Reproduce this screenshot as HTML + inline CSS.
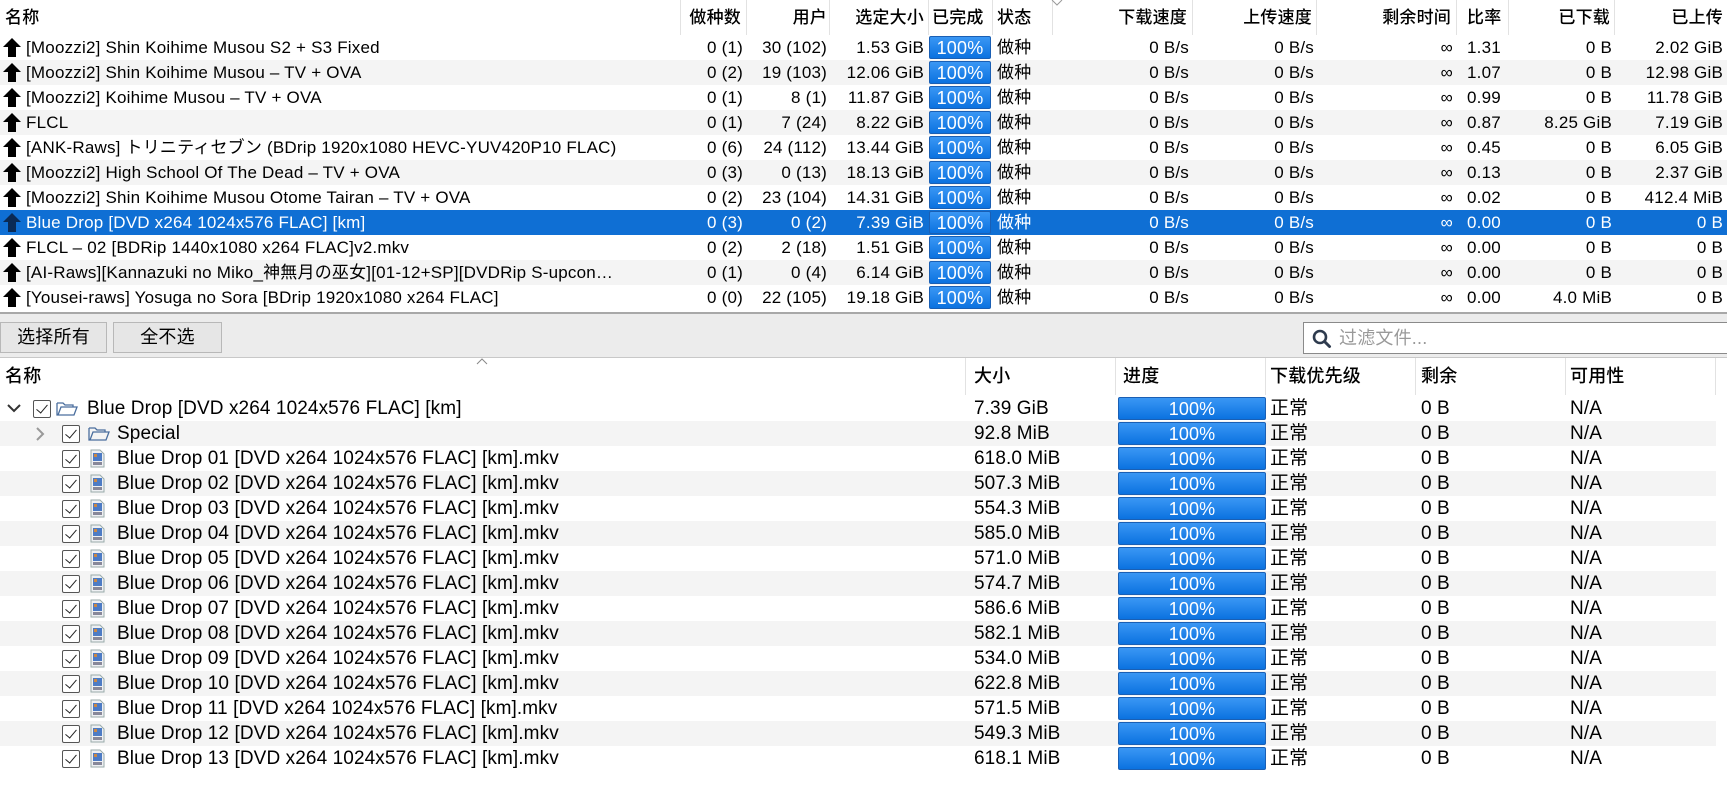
<!DOCTYPE html>
<html><head><meta charset="utf-8"><style>
*{margin:0;padding:0;box-sizing:border-box}
body{width:1727px;height:785px;overflow:hidden;background:#fff;font-family:"Liberation Sans","Noto Sans CJK SC",sans-serif;font-size:17px;letter-spacing:0.2px;color:#000;position:relative}
.r{position:absolute;left:0;width:1727px;height:25px;line-height:25px;white-space:nowrap}
.r span{position:absolute;top:0}
.lo{font-size:19px;letter-spacing:0.1px}
.g{background:#f4f4f4}
.sel{background:#0f6fd4;color:#fff}
.rt{text-align:right}
.hd{position:absolute;left:0;width:1727px;white-space:nowrap;font-weight:500}
.hd span{position:absolute}
.dv{position:absolute;width:1px;background:#e2e2e2}
.bar{position:absolute;height:23px;top:1px;line-height:22px;text-align:center;color:#fff;background:linear-gradient(#3a97f4,#0b72e0);border:1px solid #1a5fb4;border-radius:2px;font-size:18px}
.c0{left:26px}.c1{left:680px;width:63px}.c2{left:746px;width:81px}.c3{left:829px;width:95px}
.c5{left:997px}.c6{left:1052px;width:137px}.c7{left:1192px;width:122px}.c8{left:1316px;width:137px}
.c9{left:1467px}.c10{left:1508px;width:104px}.c11{left:1614px;width:109px}
.ar{position:absolute;left:2px;top:3px}
.l1{left:974px}.l3{left:1270px}.l4{left:1421px}.l5{left:1570px}
.cb{position:absolute;top:4px;width:18px;height:18px;border:1px solid #555;border-radius:2px;background:#fff}
.cb:after{content:"";position:absolute;left:5px;top:1px;width:5px;height:10px;border:solid #222;border-width:0 1.5px 1.5px 0;transform:rotate(40deg)}
.btn{position:absolute;top:322px;height:31px;border:1px solid #b8b8b8;background:#e6e6e6;text-align:center;line-height:29px;font-size:18px}
</style></head><body>
<div class="hd" style="top:0;height:35px;line-height:35px">
<span style="left:5px">名称</span>
<span class="rt" style="left:680px;width:61px">做种数</span>
<span class="rt" style="left:746px;width:81px">用户</span>
<span class="rt" style="left:829px;width:95px">选定大小</span>
<span style="left:932px">已完成</span>
<span style="left:997px">状态</span>
<span class="rt" style="left:1052px;width:135px">下载速度</span>
<span class="rt" style="left:1192px;width:120px">上传速度</span>
<span class="rt" style="left:1316px;width:135px">剩余时间</span>
<span style="left:1467px">比率</span>
<span class="rt" style="left:1508px;width:102px">已下载</span>
<span class="rt" style="left:1614px;width:109px">已上传</span>
</div>
<div class="dv" style="left:680px;top:0;height:35px"></div><div class="dv" style="left:746px;top:0;height:35px"></div><div class="dv" style="left:829px;top:0;height:35px"></div><div class="dv" style="left:928px;top:0;height:35px"></div><div class="dv" style="left:992px;top:0;height:35px"></div><div class="dv" style="left:1052px;top:0;height:35px"></div><div class="dv" style="left:1192px;top:0;height:35px"></div><div class="dv" style="left:1316px;top:0;height:35px"></div><div class="dv" style="left:1456px;top:0;height:35px"></div><div class="dv" style="left:1508px;top:0;height:35px"></div><div class="dv" style="left:1614px;top:0;height:35px"></div>
<svg style="position:absolute;left:1051px;top:0" width="12" height="6"><path d="M1 0 L6 5 L11 0" fill="none" stroke="#999"/></svg>

<div id="top"></div>
<script>
var d=[
["[Moozzi2] Shin Koihime Musou S2 + S3 Fixed","0 (1)","30 (102)","1.53 GiB","1.31","0 B","2.02 GiB"],
["[Moozzi2] Shin Koihime Musou – TV + OVA","0 (2)","19 (103)","12.06 GiB","1.07","0 B","12.98 GiB"],
["[Moozzi2] Koihime Musou – TV + OVA","0 (1)","8 (1)","11.87 GiB","0.99","0 B","11.78 GiB"],
["FLCL","0 (1)","7 (24)","8.22 GiB","0.87","8.25 GiB","7.19 GiB"],
["[ANK-Raws] トリニティセブン (BDrip 1920x1080 HEVC-YUV420P10 FLAC)","0 (6)","24 (112)","13.44 GiB","0.45","0 B","6.05 GiB"],
["[Moozzi2] High School Of The Dead – TV + OVA","0 (3)","0 (13)","18.13 GiB","0.13","0 B","2.37 GiB"],
["[Moozzi2] Shin Koihime Musou Otome Tairan – TV + OVA","0 (2)","23 (104)","14.31 GiB","0.02","0 B","412.4 MiB"],
["Blue Drop [DVD x264 1024x576 FLAC] [km]","0 (3)","0 (2)","7.39 GiB","0.00","0 B","0 B"],
["FLCL – 02 [BDRip 1440x1080 x264 FLAC]v2.mkv","0 (2)","2 (18)","1.51 GiB","0.00","0 B","0 B"],
["[AI-Raws][Kannazuki no Miko_神無月の巫女][01-12+SP][DVDRip S-upcon…","0 (1)","0 (4)","6.14 GiB","0.00","0 B","0 B"],
["[Yousei-raws] Yosuga no Sora [BDrip 1920x1080 x264 FLAC]","0 (0)","22 (105)","19.18 GiB","0.00","4.0 MiB","0 B"]];
var h="";
d.forEach(function(r,i){
var cls="r"+(i==7?" sel":(i%2?" g":""));
h+='<div class="'+cls+'" style="top:'+(35+25*i)+'px"><svg class="ar" width="20" height="19" viewBox="0 0 20 19"><path d="M10 0 L19 9 L14 9 L14 19 L6 19 L6 9 L1 9 Z" fill="'+(i==7?"#0a2a55":"#000")+'"/></svg>'+
'<span class="c0">'+r[0]+'</span><span class="c1 rt">'+r[1]+'</span><span class="c2 rt">'+r[2]+'</span><span class="c3 rt">'+r[3]+'</span>'+
'<div class="bar" style="left:929px;width:62px">100%</div><span class="c5">做种</span><span class="c6 rt">0 B/s</span><span class="c7 rt">0 B/s</span><span class="c8 rt">∞</span><span class="c9">'+r[4]+'</span><span class="c10 rt">'+r[5]+'</span><span class="c11 rt">'+r[6]+'</span></div>';
});
document.getElementById("top").outerHTML=h;
</script>

<div style="position:absolute;left:0;top:312px;width:1727px;height:2px;background:#a8a8a8"></div>
<div style="position:absolute;left:0;top:314px;width:1727px;height:44px;background:#ececec"></div>
<div class="btn" style="left:0;width:107px">选择所有</div>
<div class="btn" style="left:113px;width:109px">全不选</div>
<div style="position:absolute;left:1303px;top:322px;width:430px;height:32px;border:1px solid #8a8a8a;background:#fff">
<svg style="position:absolute;left:8px;top:6px" width="20" height="20" viewBox="0 0 20 20"><circle cx="8" cy="8" r="6" fill="none" stroke="#2e3b4e" stroke-width="2.6"/><path d="M12.5 12.5 L17.5 17.5" stroke="#2e3b4e" stroke-width="3" stroke-linecap="round"/></svg>
<span style="position:absolute;left:35px;top:0;line-height:30px;color:#999;font-size:18px">过滤文件...</span></div>
<div style="position:absolute;left:0;top:357px;width:1727px;height:1px;background:#c8c8c8"></div>
<svg style="position:absolute;left:476px;top:358px" width="12" height="7"><path d="M1 6 L6 1 L11 6" fill="none" stroke="#888"/></svg>

<div class="hd" style="top:358px;height:37px;line-height:37px;font-size:18px">
<span style="left:5px">名称</span><span style="left:974px">大小</span><span style="left:1123px">进度</span><span style="left:1270px">下载优先级</span><span style="left:1421px">剩余</span><span style="left:1570px">可用性</span></div>
<div class="dv" style="left:965px;top:358px;height:37px"></div><div class="dv" style="left:1115px;top:358px;height:37px"></div><div class="dv" style="left:1265px;top:358px;height:37px"></div><div class="dv" style="left:1415px;top:358px;height:37px"></div><div class="dv" style="left:1565px;top:358px;height:37px"></div><div class="dv" style="left:1715px;top:358px;height:37px"></div>

<div id="bot"></div>
<script>
var f=[["Blue Drop [DVD x264 1024x576 FLAC] [km]","7.39 GiB",0],["Special","92.8 MiB",1],
["01","618.0 MiB"],["02","507.3 MiB"],["03","554.3 MiB"],["04","585.0 MiB"],["05","571.0 MiB"],["06","574.7 MiB"],["07","586.6 MiB"],["08","582.1 MiB"],["09","534.0 MiB"],["10","622.8 MiB"],["11","571.5 MiB"],["12","549.3 MiB"],["13","618.1 MiB"]];
var folder=function(x){return '<svg style="position:absolute;left:'+x+'px;top:4px" width="22" height="17" viewBox="0 0 22 17"><path d="M1 3 L1 15 L18 15 L21 7 L5 7 L2 15 M1 3 L7 3 L9 5 L17 5 L17 7" fill="none" stroke="#4a6e9e" stroke-width="1.3"/></svg>';};
var file='<svg style="position:absolute;left:90px;top:3px" width="15" height="19" viewBox="0 0 15 19"><path d="M1 1 L10 1 L14 5 L14 18 L1 18 Z" fill="#eef0f3" stroke="#9aa"/><rect x="3" y="4" width="9" height="8" fill="#4d7bc4"/><rect x="4" y="5" width="3" height="3" fill="#c84"/><rect x="3" y="13" width="9" height="3" fill="#889"/></svg>';
var h2="";
f.forEach(function(r,i){
var t=396+25*i,s='<div class="r lo'+(i%2?' g':'')+'" style="top:'+t+'px;width:1716px">';
if(i==0){s+='<svg style="position:absolute;left:7px;top:8px" width="14" height="9"><path d="M1 1 L7 7 L13 1" fill="none" stroke="#333" stroke-width="2"/></svg><div class="cb" style="left:33px"></div>'+folder(56)+'<span style="left:87px">'+r[0]+'</span>';}
else if(i==1){s+='<svg style="position:absolute;left:36px;top:6px" width="9" height="14"><path d="M1 1 L7 7 L1 13" fill="none" stroke="#999" stroke-width="2"/></svg><div class="cb" style="left:62px"></div>'+folder(88)+'<span style="left:117px">'+r[0]+'</span>';}
else{s+='<div class="cb" style="left:62px"></div>'+file+'<span style="left:117px">Blue Drop '+r[0]+' [DVD x264 1024x576 FLAC] [km].mkv</span>';}
s+='<span class="l1">'+r[1]+'</span><div class="bar" style="left:1118px;width:148px">100%</div><span class="l3">正常</span><span class="l4">0 B</span><span class="l5">N/A</span></div>';
h2+=s;});
document.getElementById("bot").outerHTML=h2;
</script>
</body></html>
